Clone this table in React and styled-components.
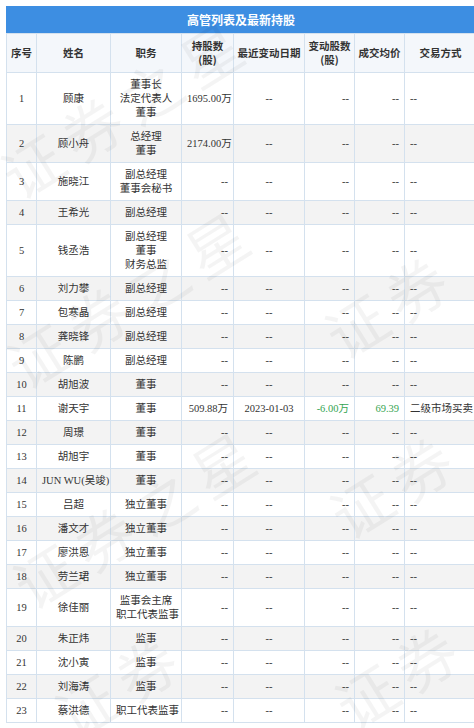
import React from 'react';
import styled, { createGlobalStyle } from 'styled-components';

const GlobalStyle = createGlobalStyle`
  html, body {
    margin: 0;
    padding: 0;
    background: #fff;
  }
  body {
    font-family: "Liberation Serif", "Noto Sans CJK SC", serif;
    color: #333;
  }
`;

const Page = styled.div`
  position: relative;
  width: 474px;
  height: 728px;
  overflow: hidden;
  padding: 6px 0 0 6px;
  box-sizing: border-box;
`;

const Title = styled.div`
  width: 470px;
  height: 27px;
  background: #3d8ee2;
  color: #fff;
  font-family: "Noto Sans CJK SC", sans-serif;
  font-size: 12px;
  font-weight: 700;
  display: flex;
  align-items: center;
  justify-content: center;
`;

const Table = styled.table`
  width: 470px;
  table-layout: fixed;
  border-collapse: collapse;
  font-size: 10.5px;
  line-height: 14px;
`;

const Head = styled.th`
  font-family: "Noto Sans CJK SC", sans-serif;
  font-weight: 700;
  color: #333;
  background: #f4f7fb;
  border: 1px solid #d4e1ee;
  padding: 5px 2px;
  text-align: center;
  height: 28px;
`;

const Row = styled.tr`
  background: ${p => (p.$striped ? '#f3f3f3' : '#fff')};
`;

const Cell = styled.td`
  border: 1px solid #d4e1ee;
  padding: 4.5px 5px;
  text-align: ${p => p.$align || 'center'};
  color: ${p => (p.$green ? '#35a552' : '#333')};
  white-space: nowrap;
  overflow: hidden;
`;

const Overlay = styled.div`
  position: absolute;
  inset: 0;
  pointer-events: none;
`;

const Mark = styled.span`
  position: absolute;
  font-family: "Noto Sans CJK SC", sans-serif;
  font-size: 60px;
  font-weight: 400;
  letter-spacing: 10px;
  line-height: 1;
  color: rgba(0, 0, 0, 0.045);
  white-space: nowrap;
  transform: rotate(-32deg);
  transform-origin: left center;
`;

const cols = [30, 74, 71, 52, 71, 50, 50, 72];

const heads = [
  ['序号'],
  ['姓名'],
  ['职务'],
  ['持股数', '(股)'],
  ['最近变动日期'],
  ['变动股数', '(股)'],
  ['成交均价'],
  ['交易方式'],
];

const none = ['--', '--', '--', '--', '--'];

const rows = [
  ['1', '顾康', ['董事长', '法定代表人', '董事'], '1695.00万', '--', '--', '--', '--'],
  ['2', '顾小舟', ['总经理', '董事'], '2174.00万', '--', '--', '--', '--'],
  ['3', '施晓江', ['副总经理', '董事会秘书'], ...none],
  ['4', '王希光', ['副总经理'], ...none],
  ['5', '钱丞浩', ['副总经理', '董事', '财务总监'], ...none],
  ['6', '刘力攀', ['副总经理'], ...none],
  ['7', '包寒晶', ['副总经理'], ...none],
  ['8', '龚晓锋', ['副总经理'], ...none],
  ['9', '陈鹏', ['副总经理'], ...none],
  ['10', '胡旭波', ['董事'], ...none],
  ['11', '谢天宇', ['董事'], '509.88万', '2023-01-03', '-6.00万', '69.39', '二级市场买卖'],
  ['12', '周璟', ['董事'], ...none],
  ['13', '胡旭宇', ['董事'], ...none],
  ['14', 'JUN WU(吴竣)', ['董事'], ...none],
  ['15', '吕超', ['独立董事'], ...none],
  ['16', '潘文才', ['独立董事'], ...none],
  ['17', '廖洪恩', ['独立董事'], ...none],
  ['18', '劳兰珺', ['独立董事'], ...none],
  ['19', '徐佳丽', ['监事会主席', '职工代表监事'], ...none],
  ['20', '朱正炜', ['监事'], ...none],
  ['21', '沈小寅', ['监事'], ...none],
  ['22', '刘海涛', ['监事'], ...none],
  ['23', '蔡洪德', ['职工代表监事'], ...none],
];

const aligns = ['center', 'center', 'center', 'right', 'center', 'right', 'right', 'left'];

// watermark placement; the right column only shows the first half
const marks = [
  { x: 6, y: 150, text: '证券之星' },
  { x: 12, y: 340, text: '证券之星' },
  { x: 18, y: 560, text: '证券之星' },
  { x: 60, y: 690, text: '证券' },
  { x: 330, y: 310, text: '证券' },
  { x: 335, y: 490, text: '证券' },
  { x: 340, y: 680, text: '证券' },
];

const Lines = ({ items }) =>
  items.map((t, i) => (
    <React.Fragment key={i}>
      {i > 0 && <br />}
      {t}
    </React.Fragment>
  ));

export default function App() {
  return (
    <>
      <GlobalStyle />
      <Page>
        <Title>高管列表及最新持股</Title>
        <Table>
          <colgroup>
            {cols.map((w, i) => (
              <col key={i} style={{ width: w }} />
            ))}
          </colgroup>
          <thead>
            <tr>
              {heads.map((h, i) => (
                <Head key={i}>
                  <Lines items={h} />
                </Head>
              ))}
            </tr>
          </thead>
          <tbody>
            {rows.map((r, ri) => (
              <Row key={ri} $striped={ri % 2 === 1}>
                {r.map((v, ci) => (
                  <Cell
                    key={ci}
                    $align={aligns[ci]}
                    $green={ri === 10 && (ci === 5 || ci === 6)}
                  >
                    {Array.isArray(v) ? <Lines items={v} /> : v}
                  </Cell>
                ))}
              </Row>
            ))}
          </tbody>
        </Table>
        <Overlay>
          {marks.map((m, i) => (
            <Mark key={i} style={{ left: m.x, top: m.y }}>
              {m.text}
            </Mark>
          ))}
        </Overlay>
      </Page>
    </>
  );
}
